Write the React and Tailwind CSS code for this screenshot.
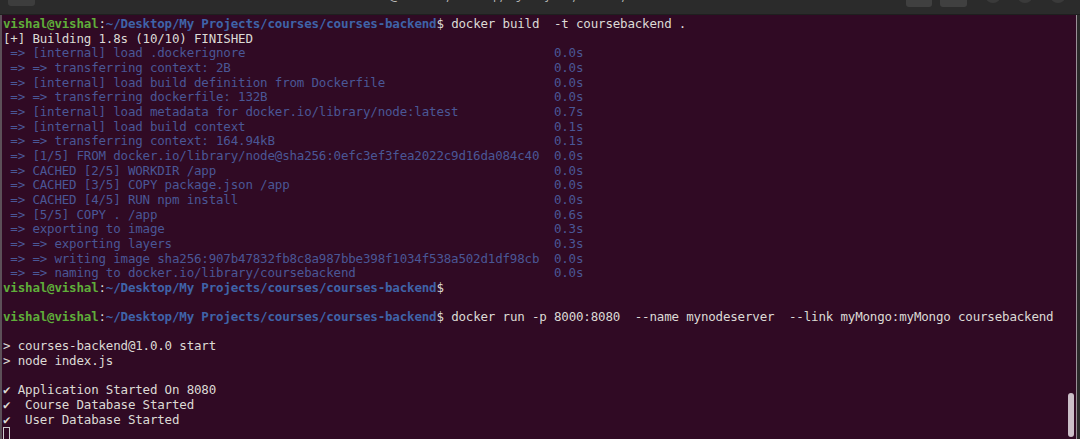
import React from "react";

const dim = [
  [" => [internal] load .dockerignore", "0.0s"],
  [" => => transferring context: 2B", "0.0s"],
  [" => [internal] load build definition from Dockerfile", "0.0s"],
  [" => => transferring dockerfile: 132B", "0.0s"],
  [" => [internal] load metadata for docker.io/library/node:latest", "0.7s"],
  [" => [internal] load build context", "0.1s"],
  [" => => transferring context: 164.94kB", "0.1s"],
  [" => [1/5] FROM docker.io/library/node@sha256:0efc3ef3fea2022c9d16da084c40", "0.0s"],
  [" => CACHED [2/5] WORKDIR /app", "0.0s"],
  [" => CACHED [3/5] COPY package.json /app", "0.0s"],
  [" => CACHED [4/5] RUN npm install", "0.0s"],
  [" => [5/5] COPY . /app", "0.6s"],
  [" => exporting to image", "0.3s"],
  [" => => exporting layers", "0.3s"],
  [" => => writing image sha256:907b47832fb8c8a987bbe398f1034f538a502d1df98cb", "0.0s"],
  [" => => naming to docker.io/library/coursebackend", "0.0s"],
];

function Prompt({ cmd }) {
  return (
    <div className="h-[14.66px]">
      <span className="font-bold text-[#5fae3a]">vishal@vishal</span>
      <span className="text-[#dcdad5]">:</span>
      <span className="font-bold text-[#3f63a8]">~/Desktop/My Projects/courses/courses-backend</span>
      <span className="text-[#dcdad5]">${cmd}</span>
    </div>
  );
}

function Line({ children, className = "" }) {
  return <div className={"h-[14.66px] " + className}>{children}</div>;
}

export default function App() {
  return (
    <div className="w-[1080px] h-[439px] overflow-hidden bg-[#300a24] flex flex-col">
      <div className="relative h-[14.5px] shrink-0 bg-[#2b2b2b] border-b border-[#1f1f1f] overflow-hidden">
        <div className="absolute left-[8px] top-0 w-[27px] h-[6px] rounded-b-[3px] bg-[#3d3d3d]" />
        <div className="absolute left-0 right-0 top-[-14px] text-center text-[13px] text-[#bdbdbd] font-['Ubuntu','DejaVu_Sans',sans-serif]">
          vishal@vishal: ~/Desktop/My Projects/courses/courses-backend
        </div>
        <div className="absolute left-[906px] top-0 w-[26px] h-[7px] rounded-b-[3px] bg-[#404040]" />
        <div className="absolute left-[940px] top-0 w-[27px] h-[7px] rounded-b-[3px] bg-[#404040]" />
        <div className="absolute left-[985px] top-[-13px] w-[16px] h-[16px] rounded-full bg-[#3a3a3a]" />
        <div className="absolute left-[1017px] top-[-13px] w-[16px] h-[16px] rounded-full bg-[#3a3a3a]" />
        <div className="absolute left-[1050px] top-[-13px] w-[16px] h-[16px] rounded-full bg-[#3a3a3a]" />
      </div>
      <div className="flex flex-1 min-h-0">
        <div className="w-[2px] bg-[#5c5058] shrink-0" />
        <div className="flex-1 pl-[1px] pt-[2.5px] font-['DejaVu_Sans_Mono',monospace] text-[12.5px] tracking-[-0.18px] leading-[14.66px] whitespace-pre text-[#dcdad5]">
          <Prompt cmd=" docker build  -t coursebackend ." />
          <Line>[+] Building 1.8s (10/10) FINISHED</Line>
          {dim.map(([t, s], i) => (
            <Line key={i} className="text-[#4a5796]">
              {t.padEnd(75, " ") + s}
            </Line>
          ))}
          <Prompt cmd="" />
          <Line> </Line>
          <Prompt cmd=" docker run -p 8000:8080  --name mynodeserver  --link myMongo:myMongo coursebackend" />
          <Line> </Line>
          <Line>{"> courses-backend@1.0.0 start"}</Line>
          <Line>{"> node index.js"}</Line>
          <Line> </Line>
          <Line>✔ Application Started On 8080</Line>
          <Line>✔  Course Database Started</Line>
          <Line>✔  User Database Started</Line>
          <Line>
            <span className="inline-block w-[7.34px] h-[15px] border border-[#cfcfcf] align-top" />
          </Line>
        </div>
        <div className="w-[10px] shrink-0 flex flex-col justify-end items-center pb-[2px]">
          <div className="w-[6px] h-[44px] rounded-full bg-[#cbbfc8]" />
        </div>
        <div className="w-[1px] bg-[#9a8f97] shrink-0" />
        <div className="w-[3px] bg-[#2a2a2a] shrink-0" />
      </div>
    </div>
  );
}
